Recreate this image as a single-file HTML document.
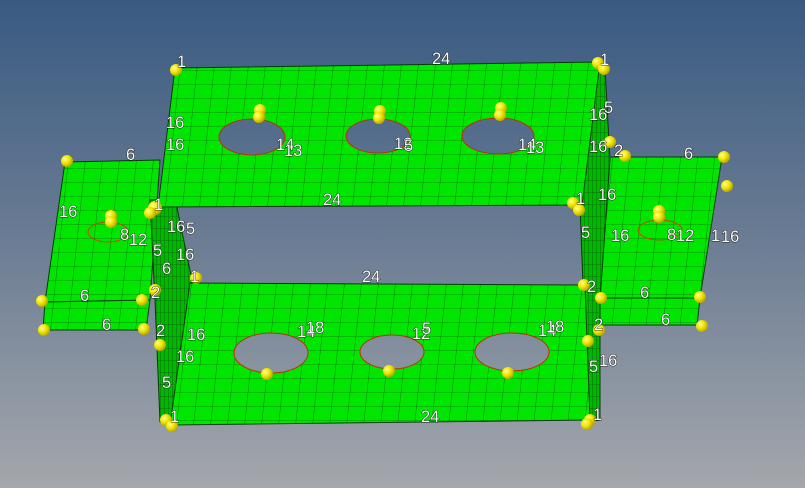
<!DOCTYPE html>
<html><head><meta charset="utf-8"><style>
html,body{margin:0;padding:0;width:805px;height:488px;overflow:hidden}
svg text{font-family:"Liberation Sans",sans-serif;font-size:16.5px;fill:#fff;stroke:#000;stroke-width:0.8px;paint-order:stroke}
</style></head><body>
<svg width="805" height="488" viewBox="0 0 805 488" xmlns="http://www.w3.org/2000/svg">
<defs>
<linearGradient id="bg" x1="0" y1="0" x2="0" y2="488" gradientUnits="userSpaceOnUse">
<stop offset="0" stop-color="#395a82"/><stop offset="0.5" stop-color="#6c7d94"/><stop offset="1" stop-color="#a4a7ac"/></linearGradient>
<pattern id="m" width="17" height="14" patternUnits="userSpaceOnUse" patternTransform="skewX(-6)">
<rect width="17" height="14" fill="#00e600"/><path d="M0 0H17M0 0V14" stroke="#0a3a0a" stroke-width="0.6"/></pattern>
<pattern id="w" width="4" height="12" patternUnits="userSpaceOnUse">
<rect width="4" height="12" fill="#00b800"/><path d="M0 0V12M0 0H4" stroke="#0a3a0a" stroke-width="0.6"/></pattern>
<radialGradient id="ball" cx="0.35" cy="0.35" r="0.7"><stop offset="0" stop-color="#ffff90"/><stop offset="0.5" stop-color="#f0e400"/><stop offset="1" stop-color="#b0a000"/></radialGradient>
</defs>
<rect width="805" height="488" fill="url(#bg)"/>
<polygon points="65,162 160,160 150,300 45,302" fill="url(#m)" stroke="#0a3a0a"/>
<polygon points="45,302 150,300 146,330 43,330" fill="url(#m)" stroke="#0a3a0a"/>
<polygon points="605,157 722,157 700,298 595,298" fill="url(#m)" stroke="#0a3a0a"/>
<polygon points="595,298 700,298 697,325 598,325" fill="url(#m)" stroke="#0a3a0a"/>
<polygon points="150,200 175,198 192,280 190,290 175,425 160,422 155,300" fill="url(#w)" stroke="#0a3a0a"/>
<polygon points="583,64 605,68 610,160 600,300 600,420 585,422 583,285 580,205" fill="url(#w)" stroke="#0a3a0a"/>
<polygon points="175,68 600,62 582,205 158,207" fill="url(#m)" stroke="#0a3a0a"/>
<polygon points="190,283 585,285 590,420 170,425" fill="url(#m)" stroke="#0a3a0a"/>
<g fill="url(#bg)" stroke="#c03000" stroke-width="1">
<ellipse cx="252" cy="137" rx="33" ry="18"/><ellipse cx="378" cy="136" rx="32" ry="17"/><ellipse cx="498" cy="136" rx="36" ry="18"/>
<ellipse cx="271" cy="353" rx="37" ry="20"/><ellipse cx="392" cy="352" rx="32" ry="17"/><ellipse cx="512" cy="352" rx="37" ry="19"/>
</g>
<g fill="none" stroke="#d04000" stroke-width="1"><ellipse cx="108" cy="232" rx="20" ry="10"/><ellipse cx="660" cy="230" rx="22" ry="10"/></g>
<g fill="url(#ball)">
<circle cx="176" cy="70" r="6"/><circle cx="598" cy="63" r="6"/><circle cx="604" cy="69" r="6"/>
<circle cx="260" cy="110" r="6"/><circle cx="259" cy="117" r="6"/><circle cx="380" cy="111" r="6"/><circle cx="379" cy="118" r="6"/>
<circle cx="501" cy="108" r="6"/><circle cx="500" cy="115" r="6"/>
<circle cx="67" cy="161" r="6"/><circle cx="111" cy="216" r="6"/><circle cx="111" cy="222" r="6"/>
<circle cx="155" cy="208" r="7"/><circle cx="150" cy="213" r="6"/>
<circle cx="610" cy="142" r="6"/><circle cx="625" cy="156" r="6"/><circle cx="724" cy="157" r="6"/><circle cx="727" cy="186" r="6"/>
<circle cx="659" cy="211" r="6"/><circle cx="659" cy="217" r="6"/><circle cx="573" cy="203" r="6"/><circle cx="579" cy="210" r="6"/>
<circle cx="196" cy="278" r="6"/><circle cx="584" cy="285" r="6"/><circle cx="601" cy="298" r="6"/>
<circle cx="42" cy="301" r="6"/><circle cx="44" cy="330" r="6"/><circle cx="142" cy="300" r="6"/><circle cx="144" cy="329" r="6"/>
<circle cx="155" cy="290" r="6"/><circle cx="160" cy="345" r="6"/><circle cx="700" cy="297" r="6"/><circle cx="702" cy="326" r="6"/>
<circle cx="599" cy="330" r="6"/><circle cx="588" cy="341" r="6"/>
<circle cx="267" cy="374" r="6"/><circle cx="389" cy="371" r="6"/><circle cx="508" cy="373" r="6"/>
<circle cx="166" cy="420" r="6"/><circle cx="172" cy="426" r="6"/><circle cx="590" cy="420" r="6"/><circle cx="587" cy="424" r="6"/>
</g>
<text x="177" y="67">1</text><text x="432" y="64">24</text><text x="600" y="65">1</text>
<text x="166" y="128">16</text><text x="166" y="150">16</text><text x="589" y="120">16</text><text x="604" y="113">5</text>
<text x="589" y="152">16</text><text x="614" y="156">2</text><text x="684" y="159">6</text>
<text x="276" y="150">14</text><text x="284" y="156">13</text><text x="394" y="149">12</text><text x="404" y="151">5</text>
<text x="518" y="150">14</text><text x="526" y="153">13</text>
<text x="126" y="160">6</text><text x="59" y="217">16</text><text x="120" y="240">8</text><text x="129" y="245">12</text>
<text x="154" y="210">1</text><text x="167" y="232">16</text><text x="186" y="234">5</text><text x="176" y="260">16</text>
<text x="153" y="256">5</text><text x="162" y="274">6</text><text x="190" y="282">1</text>
<text x="323" y="205">24</text><text x="576" y="204">1</text><text x="598" y="200">16</text><text x="581" y="238">5</text>
<text x="611" y="241">16</text><text x="667" y="240">8</text><text x="676" y="241">12</text><text x="711" y="241">1</text><text x="721" y="242">16</text>
<text x="362" y="282">24</text><text x="587" y="292">2</text><text x="640" y="298">6</text><text x="661" y="325">6</text>
<text x="80" y="301">6</text><text x="102" y="330">6</text><text x="151" y="298">2</text><text x="156" y="336">2</text>
<text x="187" y="340">16</text><text x="176" y="362">16</text><text x="162" y="388">5</text>
<text x="297" y="337">14</text><text x="306" y="333">18</text><text x="412" y="339">12</text><text x="422" y="334">5</text>
<text x="538" y="336">14</text><text x="546" y="332">18</text><text x="594" y="330">2</text><text x="599" y="366">16</text><text x="589" y="372">5</text>
<text x="170" y="422">1</text><text x="421" y="422">24</text><text x="593" y="420">1</text>
</svg>
</body></html>
